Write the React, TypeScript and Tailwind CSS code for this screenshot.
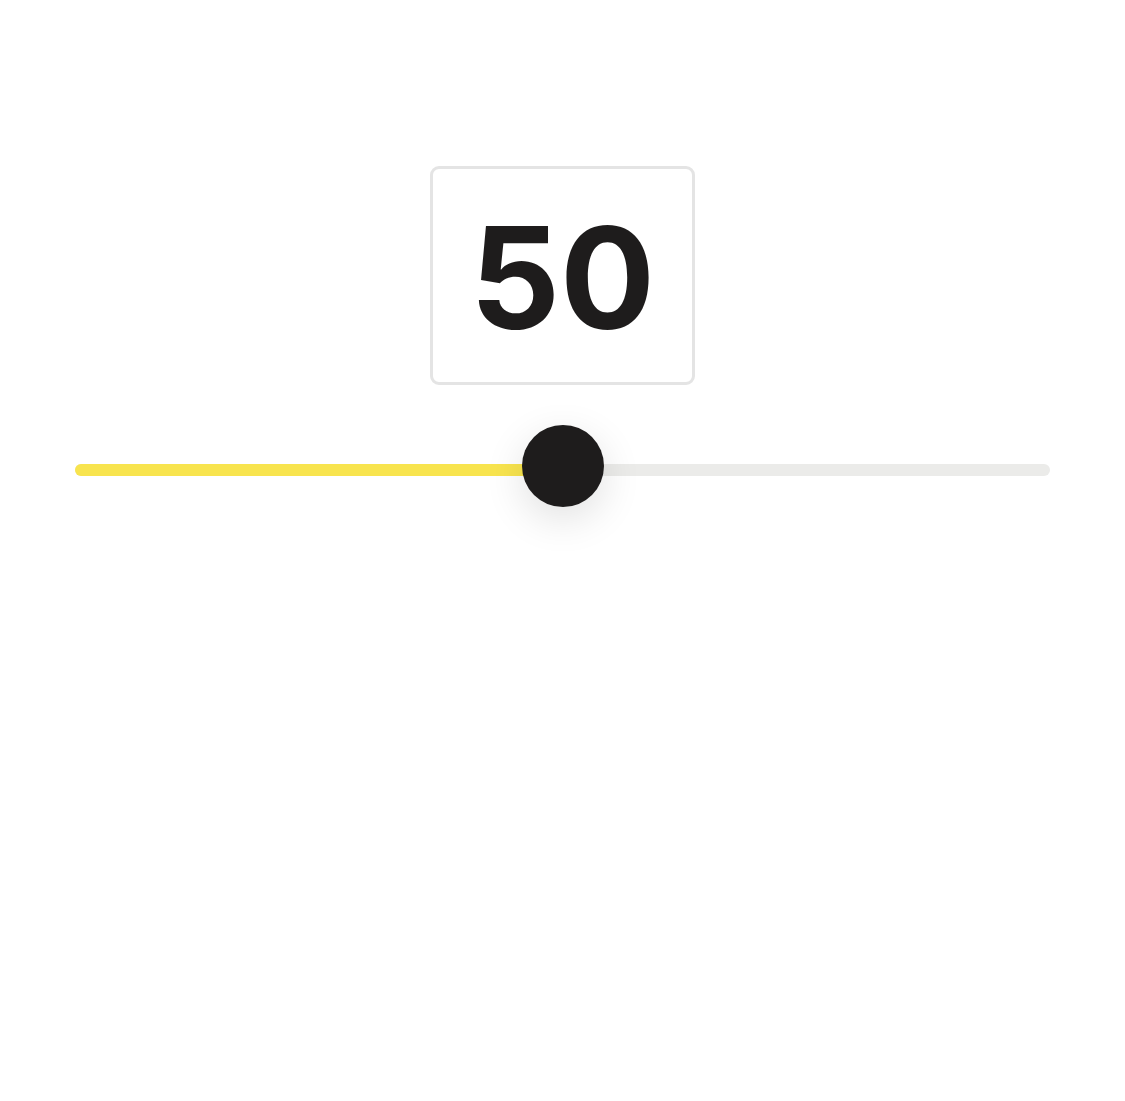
import { useState } from "react";

export default function App() {
  const [value, setValue] = useState(50);

  return (
    <div className="min-h-[1101px] w-full bg-white px-[75px] pt-[166px]" style={{ fontFamily: "Inter, 'Liberation Sans', sans-serif" }}>
      <div className="flex flex-col items-center">
        <div className="flex h-[219px] w-[265px] items-center justify-center rounded-[9px] border-[3px] border-[#e4e4e4] bg-white">
          <span className="pt-[4px] text-[141px] font-bold leading-none text-[#1e1c1c]">{value}</span>
        </div>
      </div>

      <div className="relative mt-[40px] h-[82px] w-full">
        <div className="absolute left-0 right-0 top-[39px] h-[12px] rounded-full bg-[#ebebe9]">
          <div className="h-full rounded-full bg-[#f8e44e]" style={{ width: `${value}%` }} />
        </div>
        <div
          className="absolute top-0 h-[82px] w-[82px] -translate-x-1/2 rounded-full bg-[#1e1c1c] shadow-[0_12px_40px_rgba(0,0,0,0.12)]"
          style={{ left: `${value}%` }}
        />
        <input
          type="range"
          min={0}
          max={100}
          value={value}
          onChange={(e) => setValue(Number(e.target.value))}
          className="absolute inset-0 h-full w-full cursor-pointer opacity-0"
        />
      </div>
    </div>
  );
}
